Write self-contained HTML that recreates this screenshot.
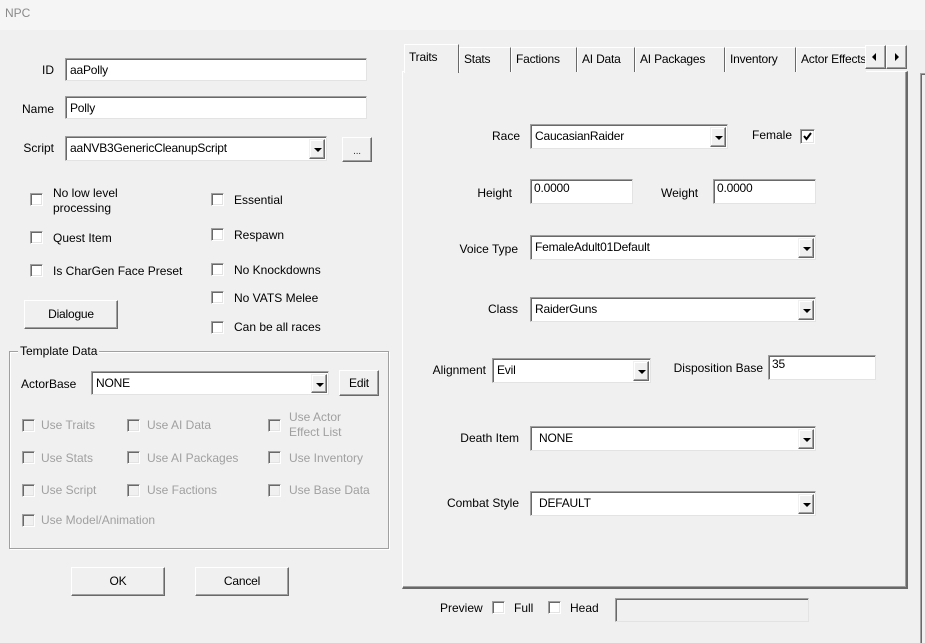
<!DOCTYPE html>
<html><head><meta charset="utf-8"><style>
*{box-sizing:border-box;margin:0;padding:0}
body{width:925px;height:643px;background:#f0f0f0;font-family:"Liberation Sans",sans-serif;font-size:12px;color:#000;position:relative;overflow:hidden}
.a{position:absolute;white-space:nowrap;line-height:14px}
.r{text-align:right}
.ed{position:absolute;background:#fff;border-top:1px solid #a0a0a0;border-left:1px solid #a0a0a0;border-right:1px solid #e3e3e3;border-bottom:1px solid #e3e3e3;box-shadow:inset 1px 1px 0 #696969;padding:4px 0 0 4px;line-height:15px;letter-spacing:-0.2px;white-space:nowrap;overflow:hidden}
.ed .ar{position:absolute;right:1px;top:2px;bottom:1px;width:16px;background:#f0f0f0;border-top:1px solid #f0f0f0;border-left:1px solid #f0f0f0;border-right:1px solid #696969;border-bottom:1px solid #696969;box-shadow:inset -1px -1px 0 #a0a0a0,inset 1px 1px 0 #fff}
.ed .ar:after{content:"";position:absolute;left:4px;top:8px;border-left:4px solid transparent;border-right:4px solid transparent;border-top:4px solid #000}
.btn{position:absolute;background:#f0f0f0;border-top:1px solid #fff;border-left:1px solid #fff;border-right:1px solid #696969;border-bottom:1px solid #696969;box-shadow:inset -1px -1px 0 #a0a0a0;text-align:center;letter-spacing:-0.2px}
.cb{position:absolute;width:13px;height:13px;background:#fff;border-top:1px solid #a0a0a0;border-left:1px solid #a0a0a0;border-right:1px solid #fff;border-bottom:1px solid #fff;box-shadow:inset 1px 1px 0 #696969,inset -1px -1px 0 #e3e3e3}
.dis .cb{background:#f0f0f0}
.dis{color:#a0a0a0}
.tab{position:absolute;top:47px;height:25px;border-top:1px solid #fff;border-left:1px solid #fff;border-right:1px solid #696969;padding:4px 4px 0;letter-spacing:-0.2px;background:#f0f0f0;white-space:nowrap;overflow:hidden}
</style></head><body>
<div style="position:absolute;left:0;top:0;width:925px;height:30px;background:#f5f5f5"></div>
<div class="a" style="left:5px;top:6px;color:#8a8a8a;font-size:12px">NPC</div>

<div class="a r" style="left:0;width:54px;top:63px">ID</div>
<div class="ed" style="left:65px;top:58px;width:302px;height:23px">aaPolly</div>
<div class="a r" style="left:0;width:54px;top:102px">Name</div>
<div class="ed" style="left:65px;top:96px;width:302px;height:23px">Polly</div>
<div class="a r" style="left:0;width:54px;top:141px">Script</div>
<div class="ed" style="left:65px;top:136px;width:262px;height:25px">aaNVB3GenericCleanupScript<div class="ar"></div></div>
<div class="btn" style="left:342px;top:137px;width:30px;height:25px;line-height:28px;font-size:10px;color:#333">...</div>

<div class="cb" style="left:30px;top:193px"></div><div class="a" style="left:53px;top:186px;line-height:15px">No low level<br>processing</div>
<div class="cb" style="left:211px;top:193px"></div><div class="a" style="left:234px;top:193px">Essential</div>
<div class="cb" style="left:30px;top:231px"></div><div class="a" style="left:53px;top:231px">Quest Item</div>
<div class="cb" style="left:211px;top:228px"></div><div class="a" style="left:234px;top:228px">Respawn</div>
<div class="cb" style="left:30px;top:264px"></div><div class="a" style="left:53px;top:264px">Is CharGen Face Preset</div>
<div class="cb" style="left:211px;top:263px"></div><div class="a" style="left:234px;top:263px">No Knockdowns</div>
<div class="cb" style="left:211px;top:291px"></div><div class="a" style="left:234px;top:291px">No VATS Melee</div>
<div class="cb" style="left:211px;top:321px"></div><div class="a" style="left:234px;top:320px">Can be all races</div>
<div class="btn" style="left:24px;top:300px;width:94px;height:29px;line-height:26px">Dialogue</div>

<div style="position:absolute;left:9px;top:351px;width:380px;height:198px;border:1px solid #a0a0a0;box-shadow:1px 1px 0 #fff, inset 1px 1px 0 #fff"></div>
<div class="a" style="left:18px;top:344px;background:#f0f0f0;padding:0 2px">Template Data</div>
<div class="a" style="left:21px;top:377px">ActorBase</div>
<div class="ed" style="left:91px;top:371px;width:238px;height:24px">NONE<div class="ar"></div></div>
<div class="btn" style="left:339px;top:370px;width:40px;height:26px;line-height:24px">Edit</div>
<div class="dis">
<div class="cb" style="left:22px;top:419px"></div><div class="a" style="left:41px;top:418px">Use Traits</div>
<div class="cb" style="left:127px;top:419px"></div><div class="a" style="left:147px;top:418px">Use AI Data</div>
<div class="cb" style="left:268px;top:419px"></div><div class="a" style="left:289px;top:410px;line-height:15px">Use Actor<br>Effect List</div>
<div class="cb" style="left:22px;top:451px"></div><div class="a" style="left:41px;top:451px">Use Stats</div>
<div class="cb" style="left:127px;top:451px"></div><div class="a" style="left:147px;top:451px">Use AI Packages</div>
<div class="cb" style="left:268px;top:451px"></div><div class="a" style="left:289px;top:451px">Use Inventory</div>
<div class="cb" style="left:22px;top:484px"></div><div class="a" style="left:41px;top:483px">Use Script</div>
<div class="cb" style="left:127px;top:484px"></div><div class="a" style="left:147px;top:483px">Use Factions</div>
<div class="cb" style="left:268px;top:484px"></div><div class="a" style="left:289px;top:483px">Use Base Data</div>
<div class="cb" style="left:22px;top:514px"></div><div class="a" style="left:41px;top:513px">Use Model/Animation</div>
</div>
<div class="btn" style="left:71px;top:567px;width:94px;height:29px;line-height:26px">OK</div>
<div class="btn" style="left:195px;top:567px;width:94px;height:29px;line-height:26px">Cancel</div>

<div style="position:absolute;left:402px;top:71px;width:506px;height:518px;border-top:1px solid #fff;border-left:1px solid #fff;border-right:2px solid #696969;border-bottom:2px solid #696969;box-shadow:inset -1px -1px 0 #a0a0a0"></div>
<div class="tab" style="left:459px;width:52px">Stats</div>
<div class="tab" style="left:511px;width:66px">Factions</div>
<div class="tab" style="left:577px;width:58px">AI Data</div>
<div class="tab" style="left:635px;width:90px">AI Packages</div>
<div class="tab" style="left:725px;width:71px">Inventory</div>
<div class="tab" style="left:796px;width:70px;border-right:none">Actor Effects</div>
<div class="tab" style="left:404px;top:44px;height:29px;width:55px;padding-top:5px;z-index:2">Traits</div>
<div class="btn" style="left:865px;top:45px;width:21px;height:24px"><div style="position:absolute;left:6px;top:7px;border-top:4px solid transparent;border-bottom:4px solid transparent;border-right:4px solid #000"></div></div>
<div class="btn" style="left:886px;top:45px;width:21px;height:24px"><div style="position:absolute;left:8px;top:7px;border-top:4px solid transparent;border-bottom:4px solid transparent;border-left:4px solid #000"></div></div>
<div style="position:absolute;left:920px;top:73px;width:5px;height:570px;border-left:1px solid #a0a0a0;border-top:1px solid #a0a0a0;box-shadow:inset 1px 1px 0 #696969"></div>

<div class="a r" style="left:440px;width:80px;top:129px">Race</div>
<div class="ed" style="left:530px;top:124px;width:198px;height:25px">CaucasianRaider<div class="ar"></div></div>
<div class="a" style="left:752px;top:128px">Female</div>
<div class="cb" style="left:800px;top:129px;width:15px;height:15px"><svg width="13" height="13" style="position:absolute;left:0;top:0"><path d="M3 6 L5.5 9 L10 3" stroke="#000" stroke-width="2" fill="none"/></svg></div>
<div class="a r" style="left:440px;width:72px;top:186px">Height</div>
<div class="ed" style="left:530px;top:179px;width:103px;height:25px;padding:1px 0 0 3px">0.0000</div>
<div class="a" style="left:661px;top:186px">Weight</div>
<div class="ed" style="left:713px;top:179px;width:103px;height:25px;padding:1px 0 0 3px">0.0000</div>
<div class="a r" style="left:440px;width:78px;top:242px">Voice Type</div>
<div class="ed" style="left:530px;top:235px;width:286px;height:25px">FemaleAdult01Default<div class="ar"></div></div>
<div class="a r" style="left:440px;width:78px;top:302px">Class</div>
<div class="ed" style="left:530px;top:297px;width:286px;height:25px">RaiderGuns<div class="ar"></div></div>
<div class="a r" style="left:400px;width:86px;top:363px">Alignment</div>
<div class="ed" style="left:492px;top:358px;width:159px;height:25px">Evil<div class="ar"></div></div>
<div class="a r" style="left:650px;width:113px;top:361px">Disposition Base</div>
<div class="ed" style="left:768px;top:355px;width:108px;height:25px;padding:1px 0 0 3px">35</div>
<div class="a r" style="left:440px;width:79px;top:431px">Death Item</div>
<div class="ed" style="left:530px;top:426px;width:286px;height:25px;padding-left:8px">NONE<div class="ar"></div></div>
<div class="a r" style="left:430px;width:89px;top:496px">Combat Style</div>
<div class="ed" style="left:530px;top:491px;width:286px;height:25px;padding-left:8px">DEFAULT<div class="ar"></div></div>

<div class="a" style="left:440px;top:601px">Preview</div>
<div class="cb" style="left:492px;top:601px"></div>
<div class="a" style="left:514px;top:601px">Full</div>
<div class="cb" style="left:548px;top:601px"></div>
<div class="a" style="left:570px;top:601px">Head</div>
<div class="ed" style="left:615px;top:598px;width:194px;height:24px;background:#f0f0f0"></div>
</body></html>
